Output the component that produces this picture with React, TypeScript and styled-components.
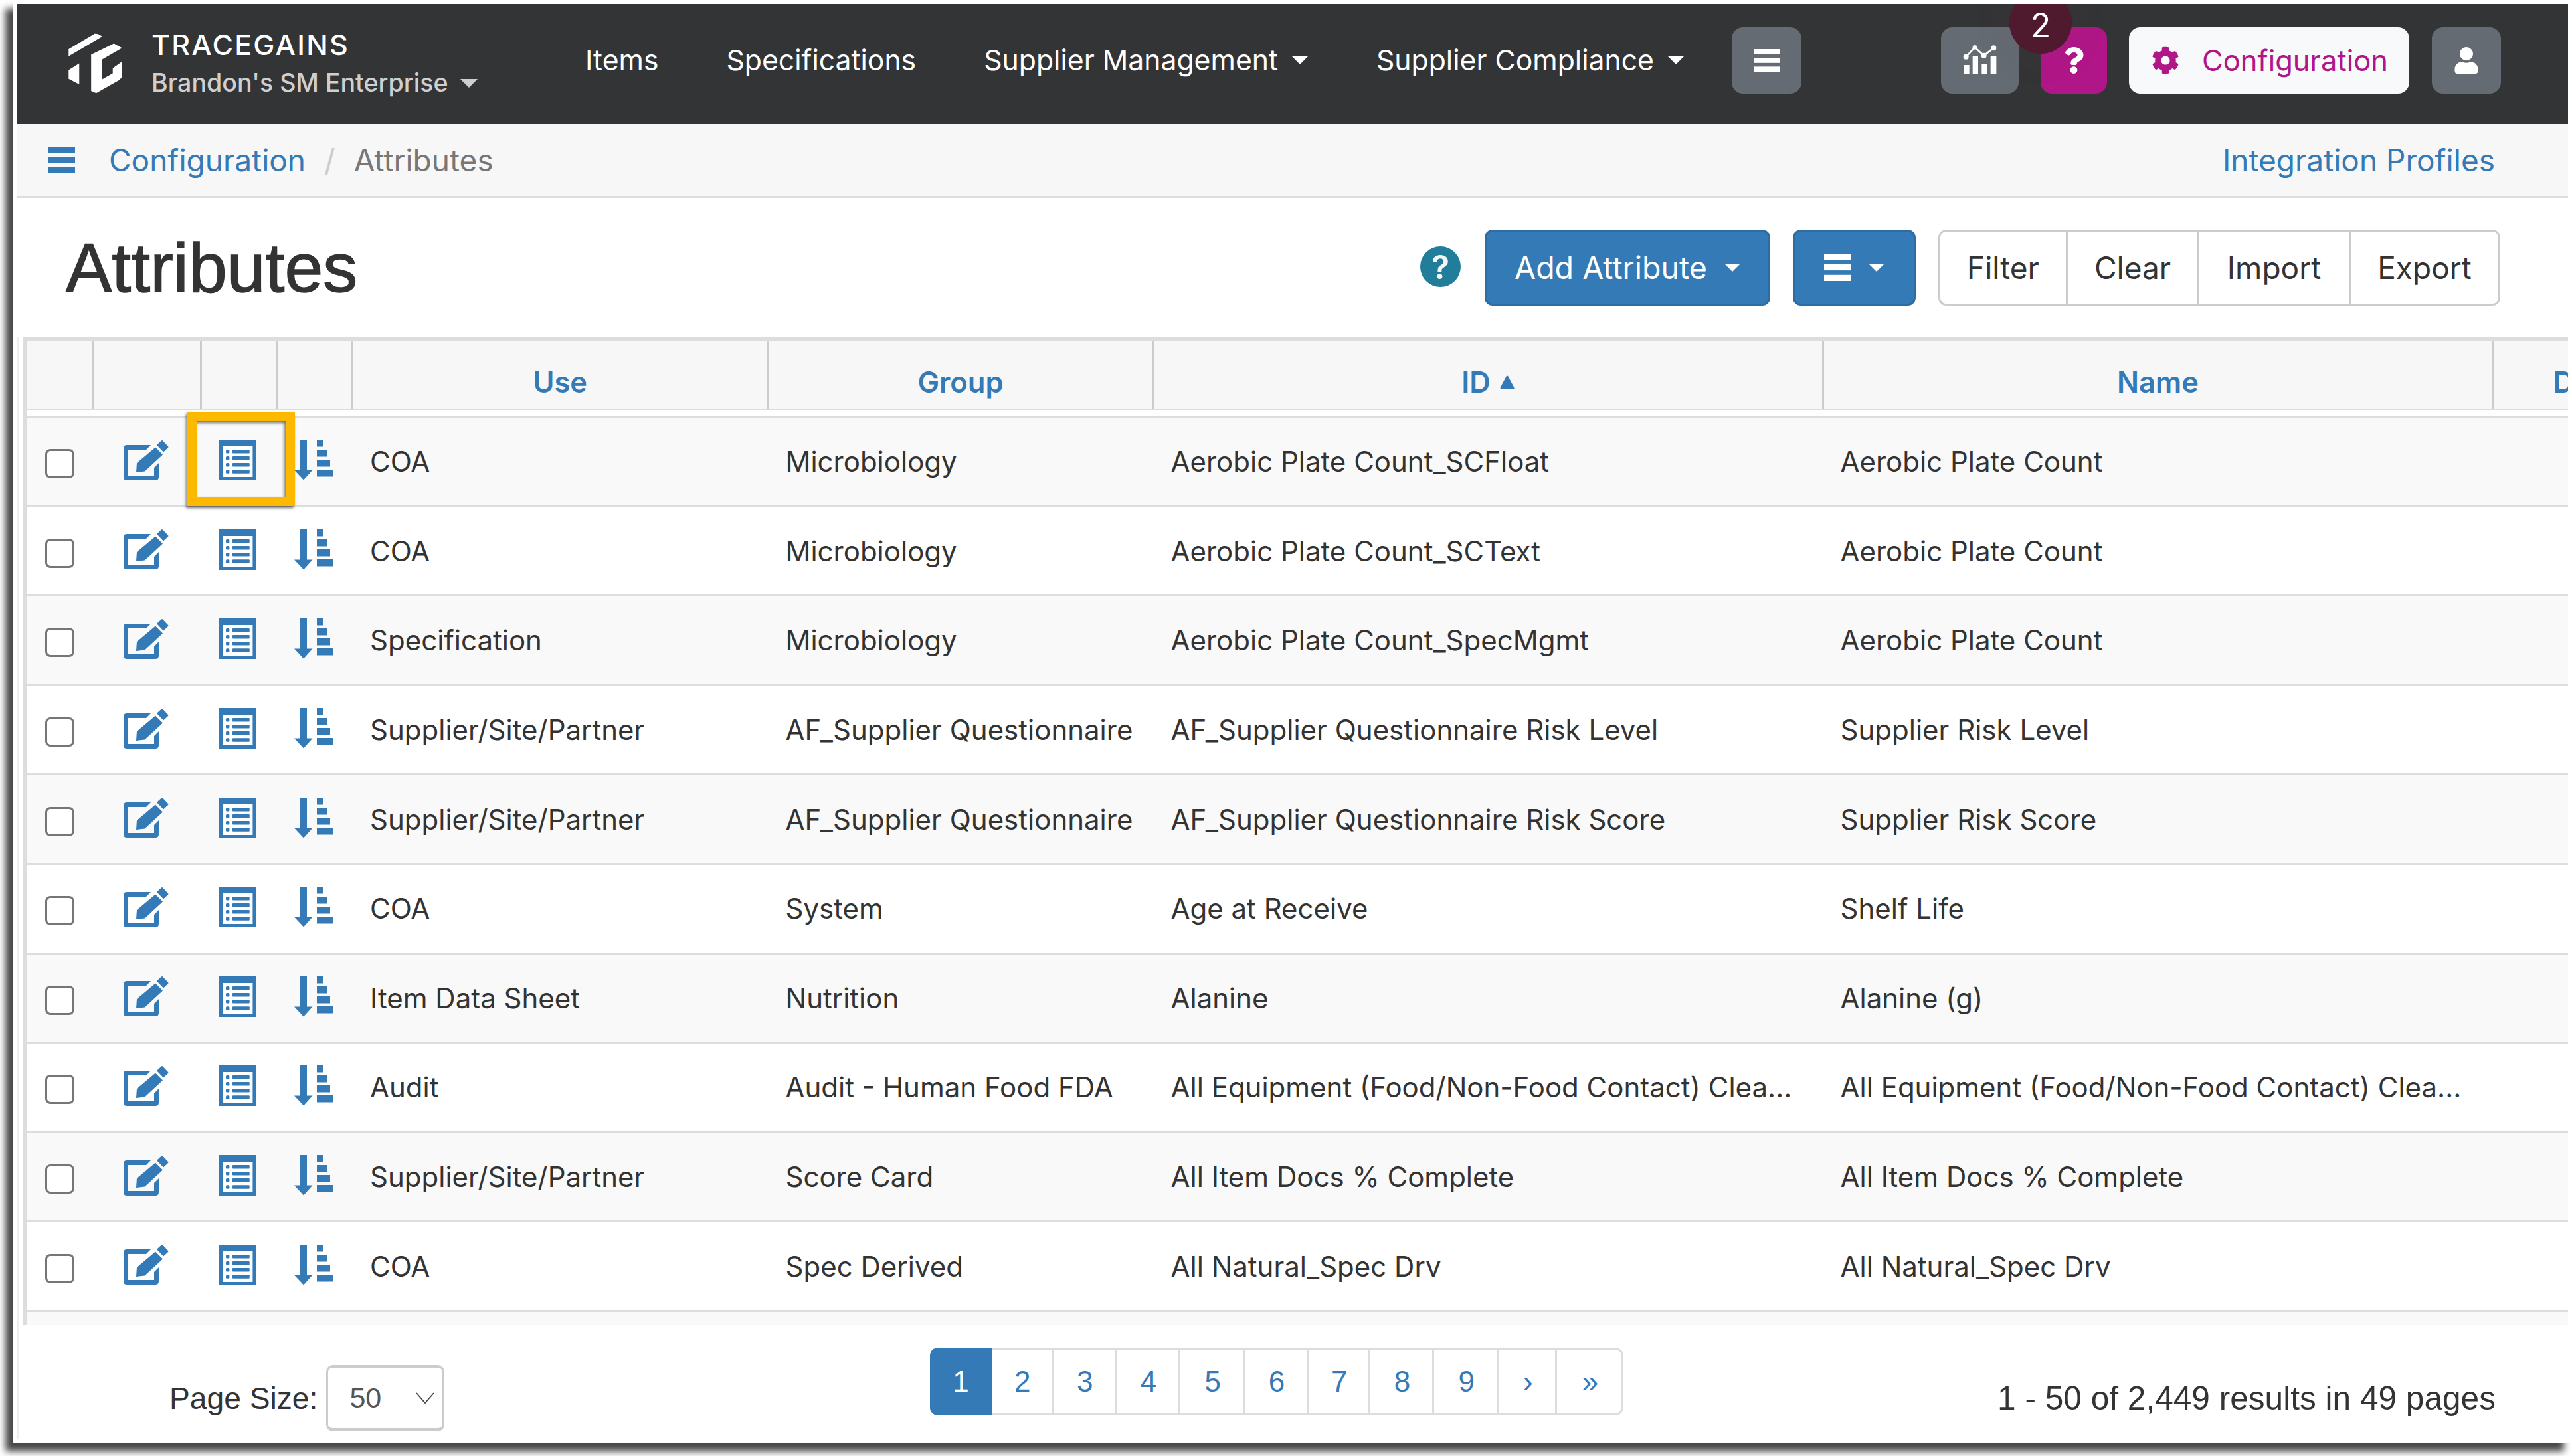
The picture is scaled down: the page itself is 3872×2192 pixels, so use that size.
import styled, { createGlobalStyle } from "styled-components";
import { FaCog, FaQuestion, FaUser } from "react-icons/fa";

const GlobalStyle = createGlobalStyle`
  html, body {
    margin: 0;
    width: 3872px;
    height: 2192px;
    overflow: hidden;
    background: #ffffff;
    font-family: Inter, "Liberation Sans", sans-serif;
    color: #333333;
  }
  * { box-sizing: border-box; }
`;

const BLUE = "#337ab7";
const MAGENTA = "#b01687";
const COLUMNS = "101px 162px 113.5px 114.5px 625.5px 580px 1008px 1009px 1fr";

const Window = styled.div`
  margin-left: 20px;
  width: 3852px;
  height: 2172px;
  padding: 6px 6px 0;
  background: #ffffff;
  box-shadow: -12px 13px 10px rgba(0, 0, 0, 0.72);
  display: flex;
  flex-direction: column;
`;

const TopBar = styled.header`
  height: 181px;
  flex: none;
  background: #333436;
  color: #ffffff;
  display: flex;
  align-items: center;
  overflow: hidden;
  padding: 0 0 12px 74px;
`;

const Brand = styled.div`
  display: flex;
  align-items: center;
  gap: 41px;
  width: 781px;
  margin-top: 4px;
`;

const LogoMark = styled.svg`
  margin-top: 5px;
  flex: none;
`;

const BrandText = styled.div`
  display: flex;
  flex-direction: column;
  gap: 10px;
  margin-top: 3px;
`;

const BrandName = styled.div`
  font-size: 43px;
  font-weight: 500;
  letter-spacing: 2.2px;
  line-height: 52px;
`;

const Tenant = styled.div`
  font-size: 37.6px;
  font-weight: 500;
  color: #cfcfcf;
  line-height: 44px;
  display: flex;
  align-items: center;
  gap: 18px;
`;

const Caret = styled.span<{ $color?: string; $size?: number }>`
  display: inline-block;
  width: 0;
  height: 0;
  border-left: ${(p) => p.$size ?? 13}px solid transparent;
  border-right: ${(p) => p.$size ?? 13}px solid transparent;
  border-top: ${(p) => p.$size ?? 13}px solid ${(p) => p.$color ?? "#ffffff"};
`;

const Nav = styled.nav`
  display: flex;
  align-items: center;
  gap: 102px;
  width: 1726px;
`;

const NavItem = styled.a`
  font-size: 42.7px;
  color: #ffffff;
  display: flex;
  align-items: center;
  gap: 20px;
`;

const TopButton = styled.button<{ $width: number; $bg?: string; $gap?: number }>`
  width: ${(p) => p.$width}px;
  height: 100px;
  flex: none;
  border: none;
  padding: 0;
  border-radius: 17px;
  background: ${(p) => p.$bg ?? "#646b73"};
  color: #ffffff;
  margin-left: ${(p) => p.$gap ?? 0}px;
  display: flex;
  align-items: center;
  justify-content: center;
`;

const HelpWrap = styled.div`
  position: relative;
  margin-left: 33px;
`;

const Badge = styled.span`
  position: absolute;
  left: -47px;
  top: -54px;
  width: 94px;
  height: 94px;
  border-radius: 50%;
  background: #4f1a2d;
  color: #ffffff;
  font-size: 50px;
  display: flex;
  align-items: center;
  justify-content: center;
  padding-top: 8px;
  box-shadow: 0 0 60px rgba(120, 60, 80, 0.12);
`;

const ConfigButton = styled.button`
  width: 422px;
  height: 100px;
  flex: none;
  margin-left: 33px;
  border: none;
  border-radius: 17px;
  background: #f8f9fa;
  color: ${MAGENTA};
  font-family: Inter, sans-serif;
  font-size: 43.5px;
  display: flex;
  align-items: center;
  gap: 34px;
  padding: 0 0 0 34px;
`;

const Crumbs = styled.div`
  height: 111px;
  flex: none;
  background: #f7f7f7;
  border-bottom: 3px solid #dddddd;
  display: flex;
  align-items: center;
  padding: 0 110px 0 47px;
  font-size: 46px;
  color: #777777;
`;

const CrumbLink = styled.a`
  color: ${BLUE};
  margin-left: 51px;
`;

const CrumbSep = styled.span`
  color: #cccccc;
  margin: 0 28px;
`;

const CrumbRight = styled.a`
  color: ${BLUE};
  margin-left: auto;
`;

const TitleRow = styled.div`
  height: 209px;
  flex: none;
  display: flex;
  align-items: center;
  padding: 0 102px 0 73px;
`;

const Title = styled.h1`
  margin: 2px 0 0;
  font-family: "Liberation Sans", sans-serif;
  font-size: 104px;
  font-weight: 400;
  -webkit-text-stroke: 1.4px #333333;
  color: #333333;
  flex: 1;
`;

const HelpCircle = styled.span`
  width: 61px;
  height: 61px;
  border-radius: 50%;
  background: #217d99;
  color: #f2f6f8;
  font-size: 50px;
  font-weight: 600;
  line-height: 1;
  display: flex;
  align-items: center;
  justify-content: center;
  margin: -2px 36px 0 0;
`;

const PrimaryButton = styled.button<{ $width: number }>`
  width: ${(p) => p.$width}px;
  height: 114px;
  background: ${BLUE};
  border: 3px solid #2e6da4;
  border-radius: 12px;
  color: #ffffff;
  font-family: Inter, sans-serif;
  font-size: 46.5px;
  margin-right: 34px;
  padding: 0;
  display: flex;
  align-items: center;
  justify-content: center;
  gap: 26px;
`;

const ActionGroup = styled.div`
  display: flex;
  height: 114px;
  border: 3px solid #cccccc;
  border-radius: 12px;
  overflow: hidden;
`;

const ActionButton = styled.button<{ $width: number }>`
  width: ${(p) => p.$width}px;
  background: #ffffff;
  border: none;
  border-right: 3px solid #cccccc;
  color: #333333;
  font-family: Inter, sans-serif;
  font-size: 46px;
  padding: 0;

  &:last-child {
    border-right: none;
  }
`;

const Lower = styled.div`
  flex: 1;
  display: flex;
  flex-direction: column;
  border-left: 3px solid #eeeeee;
  margin-bottom: 6px;
`;

const Table = styled.div`
  margin-left: 5px;
  height: 1488px;
  flex: none;
  border-left: 7px solid #dddddd;
  border-top: 6px solid #dddddd;
  overflow: hidden;
`;

const HeadRow = styled.div`
  display: grid;
  grid-template-columns: ${COLUMNS};
  height: 105px;
  background: #f7f7f7;
  border-bottom: 3px solid #dddddd;
`;

const HeadCell = styled.div`
  border-right: 3px solid #cccccc;
  color: ${BLUE};
  font-size: 43.5px;
  font-weight: 600;
  display: flex;
  align-items: center;
  justify-content: center;
  gap: 14px;
  padding-top: 21px;
  white-space: nowrap;
  overflow: hidden;

  &:last-child {
    border-right: none;
    justify-content: flex-start;
    padding-left: 89px;
  }
`;

const Rows = styled.div`
  margin-top: 8px;
  border-top: 3px solid #dddddd;
`;

const Row = styled.div<{ $odd: boolean }>`
  display: grid;
  grid-template-columns: ${COLUMNS};
  height: 134.6px;
  border-bottom: 3.5px solid #dddddd;
  background: ${(p) => (p.$odd ? "#f9f9f9" : "#ffffff")};
`;

const Cell = styled.div`
  font-size: 42px;
  display: flex;
  align-items: center;
  padding: 0 0 0 25px;
  white-space: nowrap;
  overflow: hidden;
`;

const IconCell = styled.div`
  position: relative;
  display: flex;
  align-items: center;
  justify-content: center;
  padding: 0 5px 4px 0;
`;

const Check = styled.span`
  width: 44px;
  height: 44px;
  margin: 11px 0 0 2px;
  display: block;
  border: 3.5px solid #767676;
  border-radius: 8px;
  background: #ffffff;
`;

const Highlight = styled.span`
  position: absolute;
  left: -22px;
  top: -9px;
  width: 162px;
  height: 141.5px;
  border: 14px solid #fdb900;
  box-shadow: -2px 3px 4px rgba(0, 0, 0, 0.55), inset -2px 3px 4px rgba(0, 0, 0, 0.55);
`;

const Strip = styled.div`
  height: 20px;
  background: #f9f9f9;
`;

const Footer = styled.div`
  flex: 1;
  display: grid;
  grid-template-columns: 1371px 1044px 1fr;
  font-family: "Liberation Sans", sans-serif;
`;

const PageSize = styled.div`
  display: flex;
  align-items: center;
  gap: 13px;
  margin: 60px 0 0 226px;
  height: 100px;
  font-size: 46.2px;
`;

const SizeBox = styled.div`
  width: 178px;
  height: 100px;
  border: 3px solid #cccccc;
  border-top-width: 4px;
  border-bottom-width: 5px;
  border-radius: 10px;
  display: flex;
  align-items: center;
  justify-content: space-between;
  padding: 0 12px 0 32px;
  font-size: 43px;
  color: #555555;
`;

const Pager = styled.div`
  display: flex;
  height: 102px;
  margin-top: 34px;
  border: 3px solid #dddddd;
  border-left: none;
  border-radius: 12px;
`;

const PageCell = styled.a<{ $width: number; $active?: boolean }>`
  width: ${(p) => p.$width}px;
  display: flex;
  align-items: center;
  justify-content: center;
  padding-left: ${(p) => (p.$active ? 0 : 3)}px;
  font-size: 44px;
  color: ${(p) => (p.$active ? "#ffffff" : BLUE)};
  background: ${(p) => (p.$active ? BLUE : "transparent")};
  border-right: ${(p) => (p.$active ? "none" : "3px solid #dddddd")};
  margin: ${(p) => (p.$active ? "-3px 0" : "0")};
  border-radius: ${(p) => (p.$active ? "12px 0 0 12px" : "0")};

  &:last-child {
    border-right: none;
  }
`;

const Results = styled.div`
  margin-top: 84px;
  padding-right: 109px;
  text-align: right;
  font-size: 49.6px;
  line-height: 52px;
`;

const Logo = () => (
  <LogoMark width="87" height="97" viewBox="120 65 262 290" fill="#ffffff">
    <path d="M130 178 L130 145 L248 75 Q266 74 282 88 Z" />
    <path d="M130 240 L178 210 L178 305 L130 280 Z" />
    <path d="M232 170 L335 120 L372 140 L282 192 L282 282 L330 255 L330 232 L372 202 L372 272 L360 285 L255 345 L232 335 Z" />
  </LogoMark>
);

const Bars = ({ width, height, color = "#ffffff" }: { width: number; height: number; color?: string }) => (
  <svg width={width} height={height} viewBox="0 0 40 40" preserveAspectRatio="none" fill={color}>
    <rect x="0" y="0" width="40" height="9" />
    <rect x="0" y="15.5" width="40" height="9" />
    <rect x="0" y="31" width="40" height="9" />
  </svg>
);

const ChartIcon = () => (
  <svg width="55" height="45" viewBox="215 205 165 135">
    <g fill="#ffffff">
      <rect x="224" y="295" width="26" height="42" />
      <rect x="265" y="255" width="25" height="82" />
      <rect x="306" y="290" width="26" height="47" />
      <rect x="346" y="255" width="26" height="82" />
      <circle cx="235" cy="258" r="12" />
      <circle cx="275" cy="215" r="10" />
      <circle cx="316" cy="252" r="12" />
      <circle cx="360" cy="218" r="12" />
    </g>
    <path d="M235 258 L275 215 L316 252 L360 218" stroke="#ffffff" strokeWidth="8" fill="none" />
  </svg>
);

const EditIcon = () => (
  <svg width="69" height="62" viewBox="0 0 69 62" fill={BLUE}>
    <path d="M41 8 L5 8 Q0 8 0 13 L0 56 Q0 61 5 61 L48 61 Q53 61 53 56 L53 35 L46 42 L46 54 L7 54 L7 15 L34 15 Z" />
    <path d="M20 35 L48 11.5 L59 22.5 L32 47.5 L19 49 Z" />
    <path d="M50 8 L57 1.5 Q58 0.5 59 1.5 L67 10 Q68 11 67 12 L60 18.5 Z" />
  </svg>
);

const ListIcon = () => (
  <svg width="56" height="61" viewBox="0 0 56 61">
    <rect width="56" height="61" fill={BLUE} />
    <rect x="5.4" y="10" width="45" height="46" fill="#ffffff" />
    {[15, 25, 35, 45.3].map((y) => (
      <g key={y} fill={BLUE}>
        <rect x="10" y={y} width="5.4" height="5.4" rx="1.5" />
        <rect x="20" y={y} width="25.7" height="5.4" rx="1" />
      </g>
    ))}
  </svg>
);

const SortIcon = () => (
  <svg width="59" height="61" viewBox="0 0 59 61" fill={BLUE}>
    <rect x="9" y="0" width="10" height="47" />
    <path d="M0 45.5 L27.5 45.5 L14 60.5 Z" />
    <rect x="34" y="0" width="10" height="10.5" />
    <rect x="34" y="15" width="15" height="10.5" />
    <rect x="34" y="30" width="20" height="10.5" />
    <rect x="34" y="45" width="25" height="10.5" />
  </svg>
);

const SortArrow = () => (
  <svg width="22" height="22" viewBox="0 0 22 22" fill={BLUE} stroke={BLUE} strokeWidth="3" strokeLinejoin="round">
    <path d="M11 3 L20 20 L2 20 Z" />
  </svg>
);

const Chevron = () => (
  <svg width="28" height="17" viewBox="0 0 28 17" fill="none" stroke="#444444" strokeWidth="1.8">
    <path d="M1 1 L14 16 L27 1" />
  </svg>
);

const rows = [
  ["COA", "Microbiology", "Aerobic Plate Count_SCFloat", "Aerobic Plate Count"],
  ["COA", "Microbiology", "Aerobic Plate Count_SCText", "Aerobic Plate Count"],
  ["Specification", "Microbiology", "Aerobic Plate Count_SpecMgmt", "Aerobic Plate Count"],
  ["Supplier/Site/Partner", "AF_Supplier Questionnaire", "AF_Supplier Questionnaire Risk Level", "Supplier Risk Level"],
  ["Supplier/Site/Partner", "AF_Supplier Questionnaire", "AF_Supplier Questionnaire Risk Score", "Supplier Risk Score"],
  ["COA", "System", "Age at Receive", "Shelf Life"],
  ["Item Data Sheet", "Nutrition", "Alanine", "Alanine (g)"],
  ["Audit", "Audit - Human Food FDA", "All Equipment (Food/Non-Food Contact) Clea...", "All Equipment (Food/Non-Food Contact) Clea..."],
  ["Supplier/Site/Partner", "Score Card", "All Item Docs % Complete", "All Item Docs % Complete"],
  ["COA", "Spec Derived", "All Natural_Spec Drv", "All Natural_Spec Drv"],
];

const pages = [
  { label: "1", width: 93, active: true },
  { label: "2", width: 93 },
  { label: "3", width: 95 },
  { label: "4", width: 97 },
  { label: "5", width: 96.5 },
  { label: "6", width: 96.5 },
  { label: "7", width: 92.5 },
  { label: "8", width: 97 },
  { label: "9", width: 97 },
  { label: "›", width: 88 },
  { label: "»", width: 97 },
];

function App() {
  return (
    <>
      <GlobalStyle />
      <Window>
        <TopBar>
          <Brand>
            <Logo />
            <BrandText>
              <BrandName>TRACEGAINS</BrandName>
              <Tenant>
                Brandon's SM Enterprise <Caret $color="#cfcfcf" />
              </Tenant>
            </BrandText>
          </Brand>
          <Nav>
            <NavItem>Items</NavItem>
            <NavItem>Specifications</NavItem>
            <NavItem>
              Supplier Management <Caret />
            </NavItem>
            <NavItem>
              Supplier Compliance <Caret />
            </NavItem>
          </Nav>
          <TopButton $width={105}>
            <Bars width={38} height={34} />
          </TopButton>
          <TopButton $width={117} $gap={210}>
            <ChartIcon />
          </TopButton>
          <HelpWrap>
            <Badge>2</Badge>
            <TopButton $width={100} $bg={MAGENTA}>
              <FaQuestion size={40} />
            </TopButton>
          </HelpWrap>
          <ConfigButton>
            <FaCog size={42} />
            Configuration
          </ConfigButton>
          <TopButton $width={104} $gap={34}>
            <FaUser size={40} />
          </TopButton>
        </TopBar>
        <Crumbs>
          <Bars width={40} height={40} color={BLUE} />
          <CrumbLink>Configuration</CrumbLink>
          <CrumbSep>/</CrumbSep>
          Attributes
          <CrumbRight>Integration Profiles</CrumbRight>
        </Crumbs>
        <TitleRow>
          <Title>Attributes</Title>
          <HelpCircle>?</HelpCircle>
          <PrimaryButton $width={430}>
            Add Attribute <Caret $size={12} />
          </PrimaryButton>
          <PrimaryButton $width={185}>
            <Bars width={41} height={41} /> <Caret $size={12} />
          </PrimaryButton>
          <ActionGroup>
            <ActionButton $width={192}>Filter</ActionButton>
            <ActionButton $width={198}>Clear</ActionButton>
            <ActionButton $width={228}>Import</ActionButton>
            <ActionButton $width={222}>Export</ActionButton>
          </ActionGroup>
        </TitleRow>
        <Lower>
          <Table>
            <HeadRow>
              <HeadCell />
              <HeadCell />
              <HeadCell />
              <HeadCell />
              <HeadCell>Use</HeadCell>
              <HeadCell>Group</HeadCell>
              <HeadCell>
                ID <SortArrow />
              </HeadCell>
              <HeadCell>Name</HeadCell>
              <HeadCell>D</HeadCell>
            </HeadRow>
            <Rows>
              {rows.map((row, i) => (
                <Row key={i} $odd={i % 2 === 0}>
                  <IconCell>
                    <Check />
                  </IconCell>
                  <IconCell>
                    <EditIcon />
                  </IconCell>
                  <IconCell>
                    <ListIcon />
                    {i === 0 && <Highlight />}
                  </IconCell>
                  <IconCell>
                    <SortIcon />
                  </IconCell>
                  {row.map((text, j) => (
                    <Cell key={j}>{text}</Cell>
                  ))}
                </Row>
              ))}
              <Strip />
            </Rows>
          </Table>
          <Footer>
            <PageSize>
              Page Size:
              <SizeBox>
                50
                <Chevron />
              </SizeBox>
            </PageSize>
            <Pager>
              {pages.map((page) => (
                <PageCell key={page.label} $width={page.width} $active={page.active}>
                  {page.label}
                </PageCell>
              ))}
            </Pager>
            <Results>1 - 50 of 2,449 results in 49 pages</Results>
          </Footer>
        </Lower>
      </Window>
    </>
  );
}

export default App;
